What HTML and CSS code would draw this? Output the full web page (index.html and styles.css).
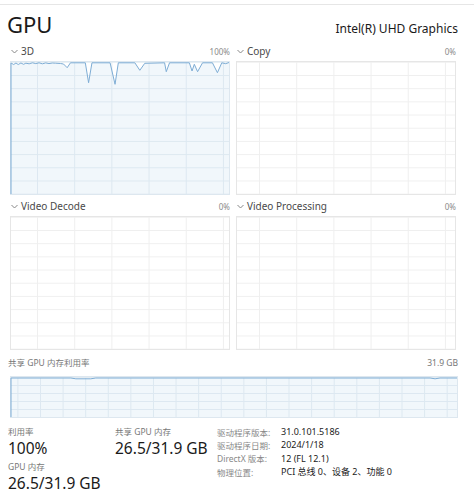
FILE: index.html
```html
<!DOCTYPE html>
<html lang="zh-CN">
<head>
  <meta charset="UTF-8">
  <title>GPU</title>
  <link rel="stylesheet" href="styles.css">
</head>
<body>
  <div class="topbar"></div>

  <div class="header">
    <h1 class="title">GPU</h1>
    <div class="adapter">Intel(R) UHD Graphics</div>
  </div>

  <div class="charts">
    <div class="panel">
      <div class="panel-head">
        <span class="panel-name">
          <svg class="chev" width="7" height="5" viewBox="0 0 7 5"><polyline points="0.5,1 3.5,4 6.5,1" fill="none" stroke="#888" stroke-width="1"/></svg>
          3D
        </span>
        <span class="pct">100%</span>
      </div>
      <div class="graph graph-active grid-a">
        <svg class="plot" viewBox="0 0 220 132" preserveAspectRatio="none">
          <path d="M0,1 L2.7,2.5 5,1 7.3,2.5 10,1 12.7,2.3 15,1.2 18.3,1.8 21.7,0.8 25,1.6 28.3,0.8 31.7,1.8 35,0.9 38.3,1.6 41.7,1 45,1.2 50,1.5 53,2 56.7,5.7 60,0.8 75,0.8 78.3,20.7 81.7,0.8 100,0.8 105,22.3 108.3,0.8 125,0.8 130,8.3 135,1.3 155,0.8 156.7,9.7 160,0.8 180,0.8 182.7,9 185,2.3 188.3,9.7 193.3,0.8 203.3,0.8 208.3,10.7 212.7,0.8 216.7,1.7 220,0.5 L220,132 L0,132 Z" fill="rgba(205,225,242,0.28)" stroke="none"/>
          <path d="M0,132 L0,1 L2.7,2.5 5,1 7.3,2.5 10,1 12.7,2.3 15,1.2 18.3,1.8 21.7,0.8 25,1.6 28.3,0.8 31.7,1.8 35,0.9 38.3,1.6 41.7,1 45,1.2 50,1.5 53,2 56.7,5.7 60,0.8 75,0.8 78.3,20.7 81.7,0.8 100,0.8 105,22.3 108.3,0.8 125,0.8 130,8.3 135,1.3 155,0.8 156.7,9.7 160,0.8 180,0.8 182.7,9 185,2.3 188.3,9.7 193.3,0.8 203.3,0.8 208.3,10.7 212.7,0.8 216.7,1.7 220,0.5" fill="none" stroke="#7eadd5" stroke-width="1" vector-effect="non-scaling-stroke"/>
        </svg>
      </div>
    </div>

    <div class="panel">
      <div class="panel-head">
        <span class="panel-name">
          <svg class="chev" width="7" height="5" viewBox="0 0 7 5"><polyline points="0.5,1 3.5,4 6.5,1" fill="none" stroke="#888" stroke-width="1"/></svg>
          Copy
        </span>
        <span class="pct">0%</span>
      </div>
      <div class="graph grid-b"></div>
    </div>

    <div class="panel">
      <div class="panel-head">
        <span class="panel-name">
          <svg class="chev" width="7" height="5" viewBox="0 0 7 5"><polyline points="0.5,1 3.5,4 6.5,1" fill="none" stroke="#888" stroke-width="1"/></svg>
          Video Decode
        </span>
        <span class="pct">0%</span>
      </div>
      <div class="graph grid-a"></div>
    </div>

    <div class="panel">
      <div class="panel-head">
        <span class="panel-name">
          <svg class="chev" width="7" height="5" viewBox="0 0 7 5"><polyline points="0.5,1 3.5,4 6.5,1" fill="none" stroke="#888" stroke-width="1"/></svg>
          Video Processing
        </span>
        <span class="pct">0%</span>
      </div>
      <div class="graph grid-b"></div>
    </div>
  </div>

  <div class="shared">
    <div class="shared-head">
      <span>共享 GPU 内存利用率</span>
      <span>31.9 GB</span>
    </div>
    <div class="graph graph-active shared-graph">
      <svg class="plot" viewBox="0 0 447 40" preserveAspectRatio="none">
        <path d="M0,1 L60,1 65,1.8 80,1.8 85,1 420,1 425,1.8 430,1 447,1 L447,40 L0,40 Z" fill="rgba(205,225,242,0.28)" stroke="none"/>
        <path d="M0,40 L0,1 L60,1 65,1.8 80,1.8 85,1 420,1 425,1.8 430,1 447,1" fill="none" stroke="#7eadd5" stroke-width="1" vector-effect="non-scaling-stroke"/>
      </svg>
    </div>
  </div>

  <div class="stats">
    <div class="stat-col">
      <div class="stat">
        <div class="stat-label">利用率</div>
        <div class="stat-value">100%</div>
      </div>
      <div class="stat">
        <div class="stat-label">GPU 内存</div>
        <div class="stat-value">26.5/31.9 GB</div>
      </div>
    </div>
    <div class="stat-col">
      <div class="stat">
        <div class="stat-label">共享 GPU 内存</div>
        <div class="stat-value">26.5/31.9 GB</div>
      </div>
    </div>
    <div class="details">
      <span class="d-key">驱动程序版本:</span><span class="d-val">31.0.101.5186</span>
      <span class="d-key">驱动程序日期:</span><span class="d-val">2024/1/18</span>
      <span class="d-key">DirectX 版本:</span><span class="d-val">12 (FL 12.1)</span>
      <span class="d-key">物理位置:</span><span class="d-val">PCI 总线 0、设备 2、功能 0</span>
    </div>
  </div>
</body>
</html>
```

FILE: styles.css
```css
body {
  margin: 0;
  padding: 0;
  background: #fff;
  color: #1a1a1a;
  font-family: "Noto Sans", "Noto Sans CJK SC", sans-serif;
  width: 474px;
  overflow: hidden;
}

.topbar {
  height: 4px;
  border-bottom: 1px solid #e6e6e6;
}

.header {
  display: flex;
  justify-content: space-between;
  align-items: baseline;
  padding: 8px 16px 0 7px;
  height: 31px;
}

.title {
  margin: 0;
  font-size: 22px;
  font-weight: 400;
  line-height: 23px;
}

.adapter {
  font-size: 12px;
  line-height: 13px;
}

.charts {
  display: grid;
  grid-template-columns: 220px 220px;
  column-gap: 6px;
  row-gap: 4px;
  padding-left: 10px;
}

.panel-head {
  display: flex;
  justify-content: space-between;
  align-items: center;
  height: 14px;
  margin-bottom: 3px;
}

.panel-name {
  display: flex;
  align-items: center;
  gap: 3px;
  font-size: 10px;
  color: #4a4a4a;
  margin-left: 1px;
}

.chev {
  display: block;
}

.pct {
  font-size: 8px;
  color: #8a8a8a;
}

.graph {
  position: relative;
  height: 132px;
  border: 1px solid #e6e6e6;
  background-color: #fff;
}

.grid-a {
  background-image:
    linear-gradient(to right, #efefef 1px, transparent 1px),
    linear-gradient(to bottom, #efefef 1px, transparent 1px);
  background-size: 37.2px 100%, 100% 13.2px;
  background-position: 26px 0, 0 13px;
}

.grid-b {
  background-image:
    linear-gradient(to right, #efefef 1px, transparent 1px),
    linear-gradient(to bottom, #efefef 1px, transparent 1px);
  background-size: 37.2px 100%, 100% 13.2px;
  background-position: 22px 0, 0 13px;
}

.graph-active {
  border-color: #dde7ef;
  background-color: #fff;
}

.graph-active.grid-a {
  background-image:
    linear-gradient(to right, #e3ebf1 1px, transparent 1px),
    linear-gradient(to bottom, #e3ebf1 1px, transparent 1px);
}

.plot {
  position: absolute;
  left: 0;
  top: 0;
  width: 100%;
  height: 100%;
  overflow: visible;
}

.shared {
  padding: 5px 16px 0 10px;
}

.shared-head {
  display: flex;
  justify-content: space-between;
  font-size: 8.5px;
  color: #777;
  height: 14px;
  align-items: center;
  margin: 0 0 7px -2px;
}

.shared-graph {
  height: 40px;
  background-image:
    linear-gradient(to right, #e3ebf1 1px, transparent 1px),
    linear-gradient(to bottom, #e3ebf1 1px, transparent 1px);
  background-size: 22.6px 100%, 100% 8px;
  background-position: 29px 0, 0 8px;
}

.stats {
  display: flex;
  padding: 7px 0 0 8px;
}

.stat-col {
  display: flex;
  flex-direction: column;
  gap: 1px;
}

.stat-col:first-child {
  width: 107px;
}

.stat-col:nth-child(2) {
  width: 102px;
}

.stat-label {
  font-size: 8.5px;
  color: #777;
  line-height: 13px;
}

.stat-value {
  font-size: 15.5px;
  line-height: 21px;
  color: #1a1a1a;
}

.details {
  display: grid;
  grid-template-columns: 64px auto;
  grid-auto-rows: 13.3px;
  font-size: 9px;
  align-items: center;
  margin-top: 0;
}

.d-key {
  color: #888;
  font-size: 8.5px;
}

.d-val {
  color: #222;
}
```
